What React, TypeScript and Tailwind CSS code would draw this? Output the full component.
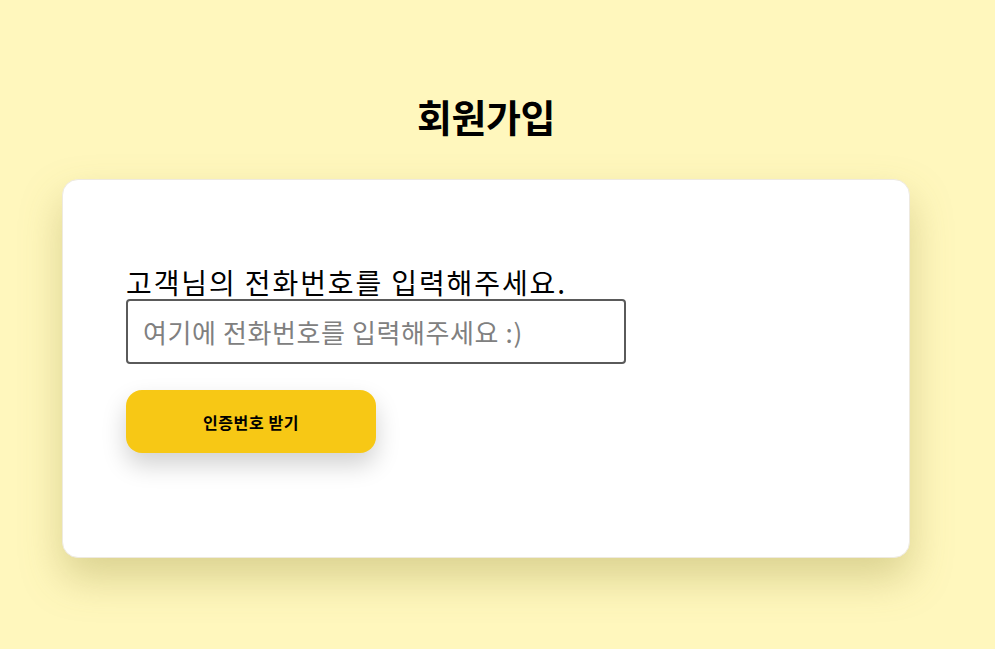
import React from "react";

export default function App() {
  return (
    <div
      className="min-h-[649px] w-full bg-[#fff7bd] pt-[94px] pb-[90px]"
      style={{ fontFamily: '"Noto Sans CJK KR", "Noto Sans", sans-serif' }}
    >
      <h1 className="ml-[62px] w-[848px] text-center text-[38px] leading-[44px] font-bold text-black tracking-[-0.5px]">
        회원가입
      </h1>
      <div className="ml-[62px] mt-[41px] h-[379px] w-[848px] rounded-[16px] bg-white px-[63px] pt-[85px] shadow-[0_20px_40px_rgba(150,140,60,0.35)] border border-[#eeeae0]">
        <div className="text-[28px] leading-[34px] text-black tracking-[1.9px]">
          고객님의 전화번호를 입력해주세요.
        </div>
        <input
          type="text"
          placeholder="여기에 전화번호를 입력해주세요 :)"
          className="block h-[65px] w-[500px] rounded-[4px] border-2 border-[#5a5a5a] px-[15px] text-[26px] tracking-[0.6px] placeholder:text-[#808080] outline-none"
        />
        <button className="mt-[26px] flex h-[63px] w-[250px] items-center justify-center rounded-[16px] bg-[#f7c815] text-[16px] font-bold text-black tracking-[0.6px] shadow-[0_12px_24px_rgba(0,0,0,0.18)]">
          인증번호 받기
        </button>
      </div>
    </div>
  );
}
